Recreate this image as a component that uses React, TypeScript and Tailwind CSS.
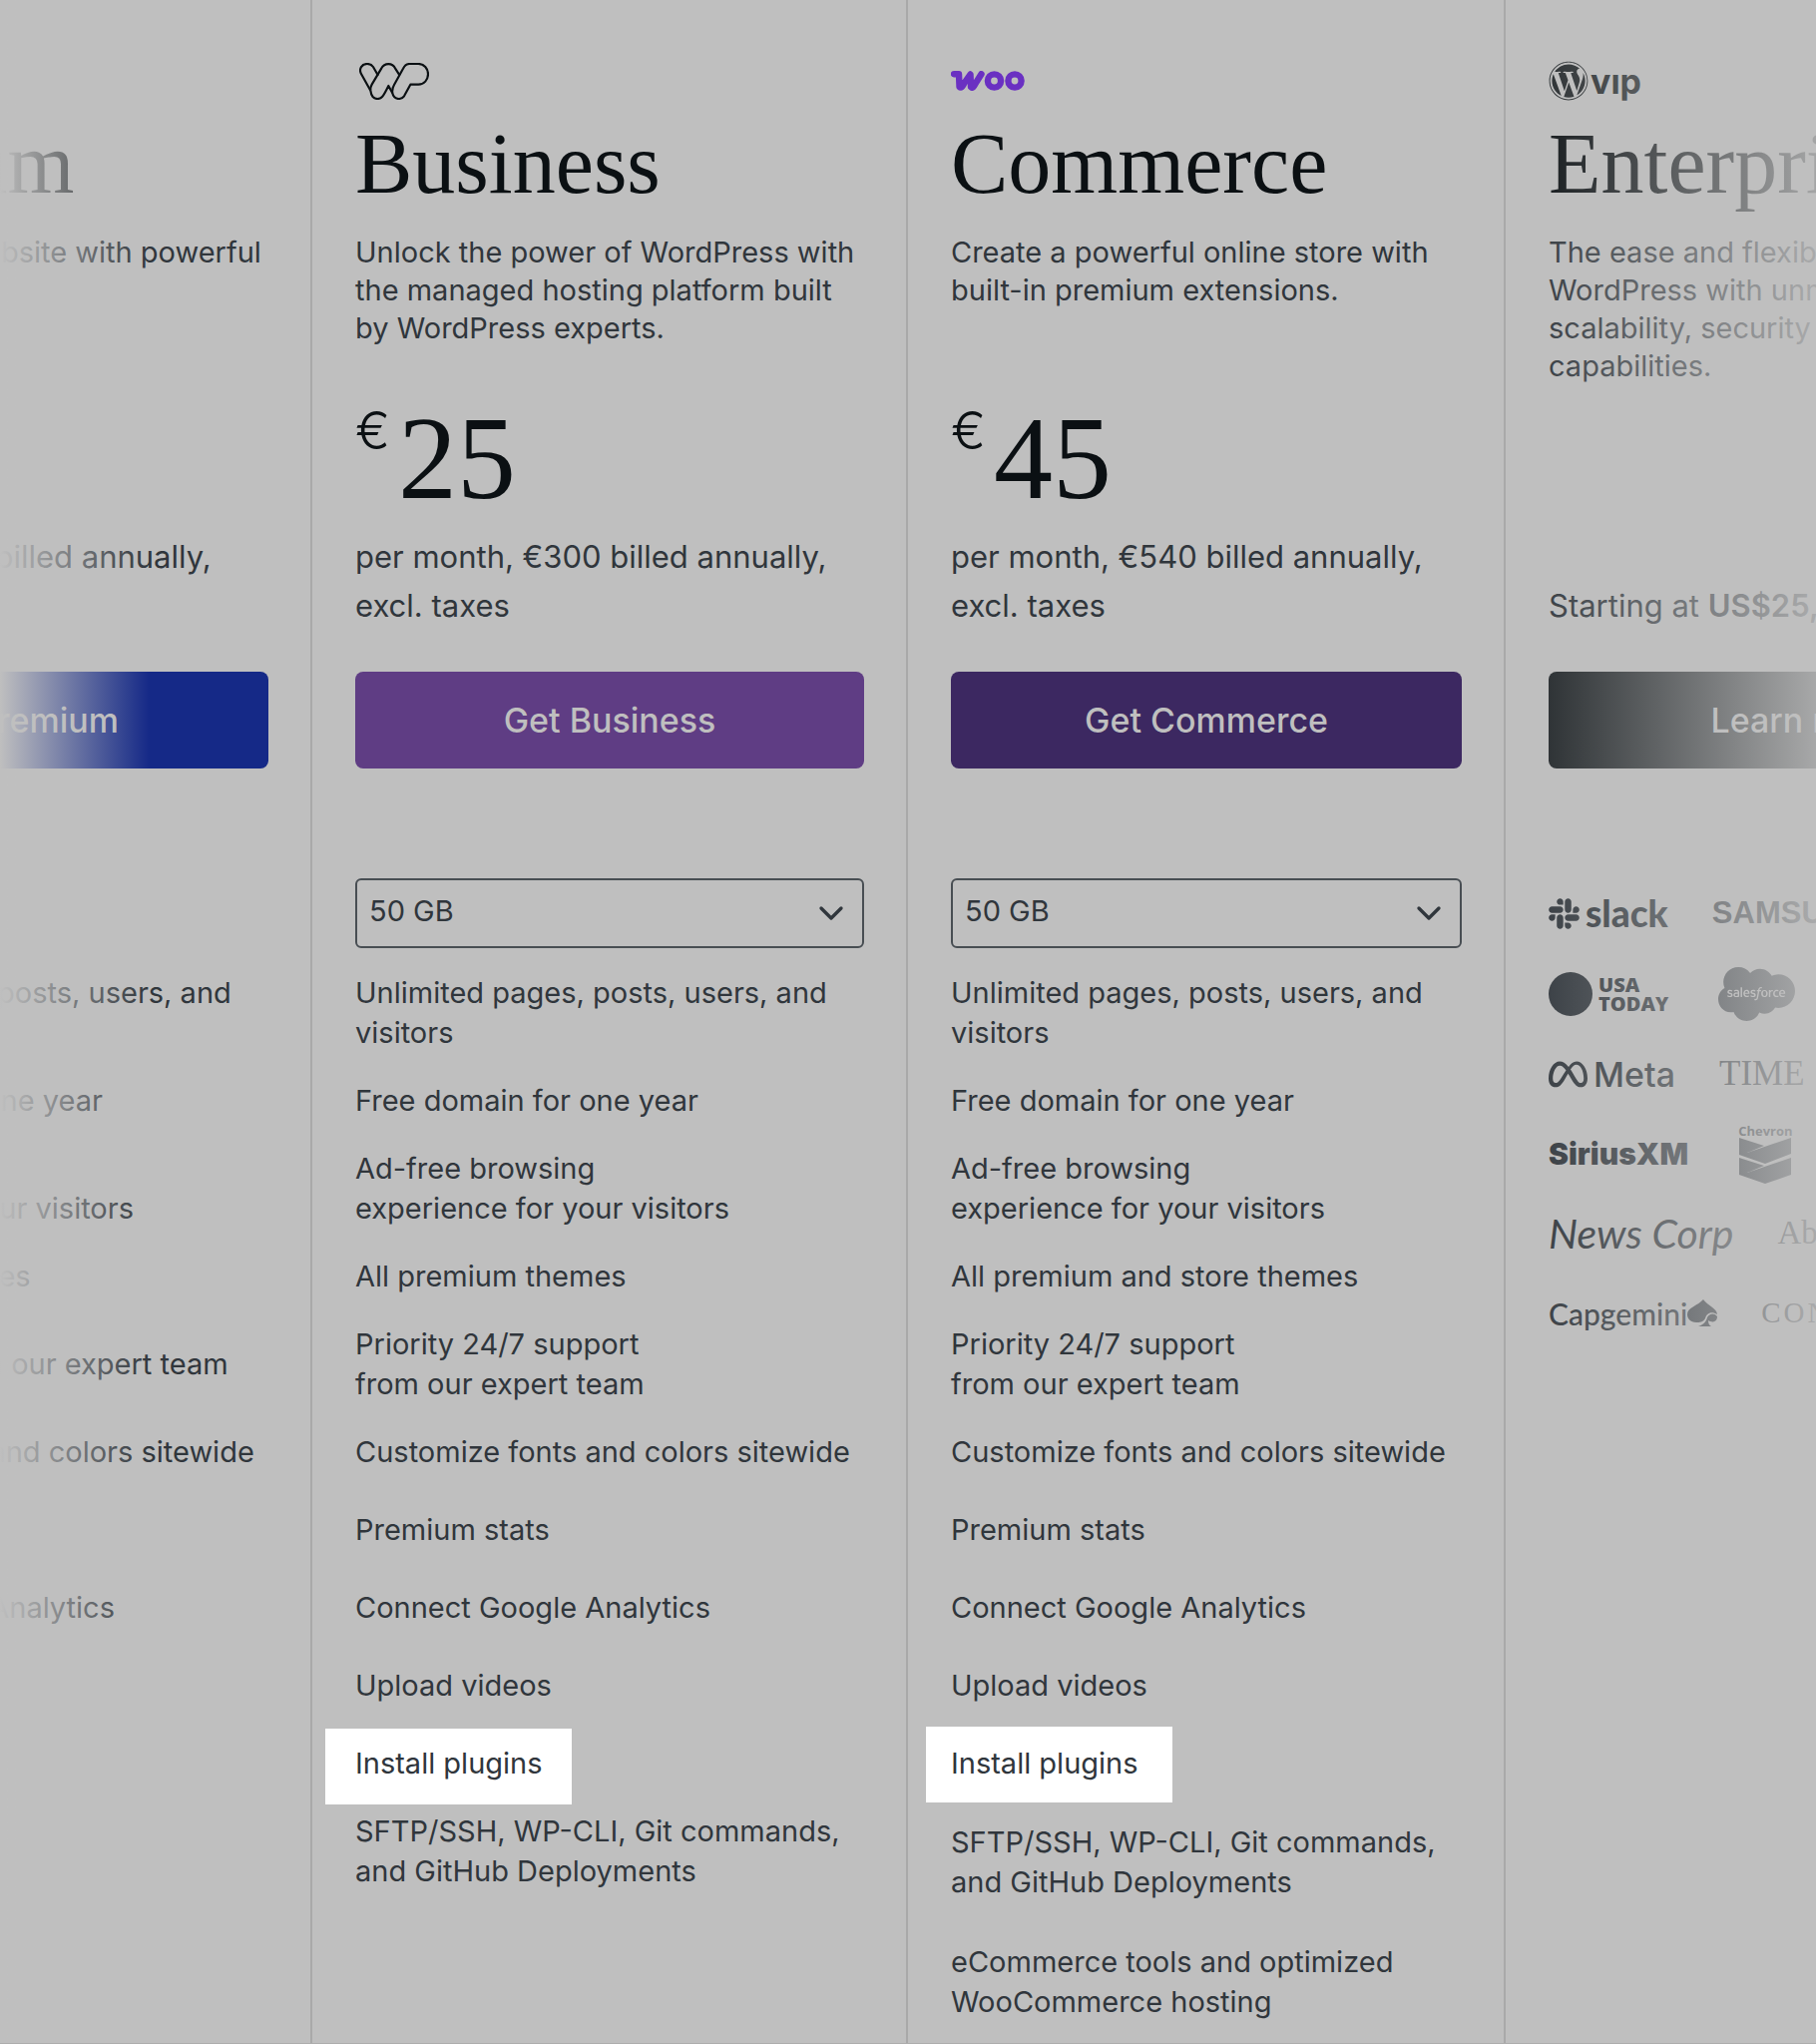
import React from 'react';
import { ChevronDown } from 'lucide-react';
import { FaSlack, FaWordpress, FaSalesforce } from 'react-icons/fa';
import { FaMeta } from 'react-icons/fa6';

interface Feature {
  text: string;
  size?: 'single' | 'double' | 'tall';
  highlight?: string;
}

const rowHeights = {
  single: 'min-h-[78px]',
  double: 'min-h-[98px]',
  tall: 'min-h-[120px]',
};

const premiumFeatures: Feature[] = [
  { text: 'Unlimited pages, posts, users, and visitors', size: 'double' },
  { text: 'Free domain for one year' },
  { text: 'Ad-free browsing\nexperience for your visitors', size: 'double' },
  { text: 'All premium themes' },
  { text: 'Fast support from our expert team', size: 'double' },
  { text: 'Customize fonts and colors sitewide' },
  { text: 'Premium stats' },
  { text: 'Connect Google Analytics' },
];

const businessFeatures: Feature[] = [
  { text: 'Unlimited pages, posts, users, and visitors', size: 'double' },
  { text: 'Free domain for one year' },
  { text: 'Ad-free browsing\nexperience for your visitors', size: 'double' },
  { text: 'All premium themes' },
  { text: 'Priority 24/7 support\nfrom our expert team', size: 'double' },
  { text: 'Customize fonts and colors sitewide' },
  { text: 'Premium stats' },
  { text: 'Connect Google Analytics' },
  { text: 'Upload videos' },
  { text: 'Install plugins', highlight: '-left-[30px] top-1' },
  { text: 'SFTP/SSH, WP-CLI, Git commands, and GitHub Deployments', size: 'double' },
];

const commerceFeatures: Feature[] = [
  { text: 'Unlimited pages, posts, users, and visitors', size: 'double' },
  { text: 'Free domain for one year' },
  { text: 'Ad-free browsing\nexperience for your visitors', size: 'double' },
  { text: 'All premium and store themes' },
  { text: 'Priority 24/7 support\nfrom our expert team', size: 'double' },
  { text: 'Customize fonts and colors sitewide' },
  { text: 'Premium stats' },
  { text: 'Connect Google Analytics' },
  { text: 'Upload videos' },
  { text: 'Install plugins', highlight: '-left-[25px] top-0.5' },
  { text: 'SFTP/SSH, WP-CLI, Git commands, and GitHub Deployments', size: 'tall' },
  { text: 'eCommerce tools and optimized WooCommerce hosting', size: 'tall' },
];

const WpLogo: React.FC = () => (
  <svg viewBox="0 0 210 111" className="ml-1 h-[37px] w-[70px]" fill="none" stroke="#0b1013" strokeWidth="6.5" strokeLinejoin="round">
    <path d="M34 83 L6 33 C-2 18 8 3 24 3 C32 3 38 6 42 12 L57 38" />
    <path d="M34 83 C33 75 35 70 38 65 L67 16 C76 -1 100 -1 108 16 L122 38" />
    <path d="M34 83 C35 92 38 98 41 102 C48 110 62 110 69 102 C76 94 81 82 88 69 L100 91" />
    <path d="M100 91 C98 80 101 73 105 66 L132 17 C137 7 142 3 152 3 H178 C195 3 207 17 207 34 C207 51 195 65 178 65 H154 L135 100 C128 110 113 110 106 103 C103 100 101 96 100 91 Z" />
  </svg>
);

const WooLogo: React.FC = () => (
  <svg viewBox="0 0 74 20" className="h-5 w-[74px]" fill="none" stroke="#6a30c2" strokeWidth="6.4" strokeLinecap="round" strokeLinejoin="round">
    <path d="M3 3.2 H8 L8.5 16 C10.5 18 12 15 13.5 12 L19.5 3.5 L20 16 C22 18 23 15.5 25 12 L30.5 3.2" />
    <circle cx="43.5" cy="10" r="6.6" />
    <circle cx="64" cy="10" r="6.6" />
  </svg>
);

const FeatureList: React.FC<{ features: Feature[] }> = ({ features }) => (
  <ul className="mt-4 text-[29px] leading-10">
    {features.map((feature) => (
      <li key={feature.text} className={`relative flex items-center ${rowHeights[feature.size ?? 'single']}`}>
        {feature.highlight && <span className={`absolute h-[76px] w-[247px] bg-white ${feature.highlight}`} />}
        <span className="relative whitespace-pre-line">{feature.text}</span>
      </li>
    ))}
  </ul>
);

interface PlanProps {
  id: string;
  name: string;
  logo?: React.ReactNode;
  description: string;
  price?: string;
  terms: React.ReactNode;
  button: string;
  buttonColor: string;
  storage?: boolean;
  children: React.ReactNode;
}

const Plan: React.FC<PlanProps> = ({ id, name, logo, description, price, terms, button, buttonColor, storage, children }) => (
  <>
    <header className="h-[402px]">
      <div className="flex h-[120px] items-end">
        <div className="flex h-[78px] items-center">{logo}</div>
      </div>
      <h2 className="-mt-1 font-['Liberation_Serif',serif] text-[86px] leading-[96px] text-[#0b1013]">{name}</h2>
      <p className="mt-[22px] text-[29px] leading-[38px] whitespace-pre-line">{description}</p>
    </header>
    <div className="flex h-[131px] items-start gap-2 text-[#0b1013]">
      {price && (
        <>
          <span className="text-[52px] leading-[60px] font-light">€</span>
          <span className="font-['Liberation_Serif',serif] text-[118px] leading-[116px]">{price}</span>
        </>
      )}
    </div>
    <p className="flex h-[98px] flex-col justify-end text-[31px] leading-[49px]">
      <span>{terms}</span>
    </p>
    <button className={`mt-[42px] h-[97px] w-full rounded-lg text-[34px] font-medium text-[#bfbfbf] ${buttonColor}`}>{button}</button>
    <div className="mt-[110px] h-[70px]">
      {storage && (
        <div className="relative">
          <label htmlFor={`${id}-storage`} className="sr-only">
            Storage
          </label>
          <select id={`${id}-storage`} className="h-[70px] w-full appearance-none rounded-md border-2 border-[#484e53] bg-transparent px-3 pb-1 text-[29px]">
            <option>50 GB</option>
            <option>100 GB</option>
          </select>
          <ChevronDown className="pointer-events-none absolute top-[15px] right-[13px] h-10 w-10" strokeWidth={2} />
        </div>
      )}
    </div>
    {children}
  </>
);

const Logos: React.FC = () => (
  <div className="-mt-[76px] flex flex-col">
    <div className="flex h-[82px] items-center gap-11">
      <span className="flex items-center gap-1.5 font-['Lato',sans-serif] text-[37px] font-black">
        <FaSlack className="h-[35px] w-[31px]" />
        slack
      </span>
      <span className="font-['Liberation_Sans',sans-serif] text-[31px] font-bold">SAMSUNG</span>
    </div>
    <div className="flex h-[80px] items-center gap-[50px]">
      <span className="flex items-center gap-1.5 font-['Open_Sans',sans-serif] text-[20px] leading-[19px] font-extrabold">
        <span className="h-11 w-11 rounded-full bg-current" />
        <span className="flex flex-col">
          <span>USA</span>
          <span>TODAY</span>
        </span>
      </span>
      <FaSalesforce className="h-[62px] w-[77px]" />
    </div>
    <div className="flex h-[80px] items-center gap-11">
      <span className="flex items-center gap-1.5 text-[34px] font-medium">
        <FaMeta className="h-[39px] w-[39px]" />
        Meta
      </span>
      <span className="font-['Liberation_Serif',serif] text-[35px]">TIME</span>
    </div>
    <div className="flex h-[80px] items-center gap-[50px]">
      <span className="text-[30px] font-black">SiriusXM</span>
      <span className="flex flex-col items-center">
        <span className="font-['Open_Sans',sans-serif] text-[13px] leading-[14px] font-bold">Chevron</span>
        <svg viewBox="0 0 52 46" className="h-[46px] w-[52px]" fill="currentColor">
          <path d="M0 0 L25 8 L8 15 L52 0 V16 L26 26 L0 17 Z" />
          <path d="M0 20 L25 28 L8 35 L52 20 V37 L26 46 L0 37 Z" />
        </svg>
      </span>
    </div>
    <div className="flex h-[80px] items-center gap-11">
      <span className="font-['Lato',sans-serif] text-[41px] italic">News Corp</span>
      <span className="font-['Liberation_Serif',serif] text-[33px]">Abbott</span>
    </div>
    <div className="flex h-[80px] items-center gap-11">
      <span className="flex items-center font-['Lato',sans-serif] text-[30px] font-medium">
        Capgemini
        <svg viewBox="0 0 30 28" className="h-7 w-[30px]" fill="currentColor">
          <path d="M16 0 C20 6 30 9 30 15 C24 11 19 14 18 19 C16 23 12 23 9 23 C3 23 0 19 0 15 C0 8 11 6 16 0 Z" />
          <path d="M30 17 C30 22 26 24 21 21 C21 24 22 26 24 27 H11 C17 25 19 22 20 18 C22 14 27 13 30 17 Z" />
        </svg>
      </span>
      <span className="font-['Liberation_Serif',serif] text-[29px] tracking-widest">CONDÉ NAST</span>
    </div>
  </div>
);

const App: React.FC = () => {
  return (
    <main className="relative grid min-h-screen grid-cols-[minmax(0,311fr)_minmax(0,597fr)_minmax(0,599fr)_minmax(0,313fr)] overflow-hidden border-b border-[#adadad] bg-[#bfbfbf] font-['Inter',sans-serif] text-[#30363c]">
      {/* Premium, scrolled partly out on the left */}
      <section className="flex justify-end pr-[42px]">
        <div className="w-[510px] shrink-0">
          <Plan
            id="premium"
            name="Premium"
            description="Build a unique website with powerful design tools."
            terms="per month, €96 billed annually, excl. taxes"
            button="Get Premium"
            buttonColor="bg-[#152987]"
          >
            <FeatureList features={premiumFeatures} />
          </Plan>
        </div>
      </section>

      <section className="border-l-2 border-[#a9a9a9] pr-[42px] pl-[43px]">
        <Plan
          id="business"
          name="Business"
          logo={<WpLogo />}
          description="Unlock the power of WordPress with the managed hosting platform built by WordPress experts."
          price="25"
          terms="per month, €300 billed annually, excl. taxes"
          button="Get Business"
          buttonColor="bg-[#5f3d84]"
          storage
        >
          <FeatureList features={businessFeatures} />
        </Plan>
      </section>

      <section className="border-l-2 border-[#a9a9a9] pr-[42px] pl-[43px]">
        <Plan
          id="commerce"
          name="Commerce"
          logo={<WooLogo />}
          description="Create a powerful online store with built-in premium extensions."
          price="45"
          terms="per month, €540 billed annually, excl. taxes"
          button="Get Commerce"
          buttonColor="bg-[#3c2861]"
          storage
        >
          <FeatureList features={commerceFeatures} />
        </Plan>
      </section>

      {/* Enterprise, running off on the right */}
      <section className="border-l-2 border-[#a9a9a9] pl-[43px]">
        <div className="w-[510px]">
          <Plan
            id="enterprise"
            name="Enterprise"
            logo={
              <span className="flex items-center gap-0.5 text-[34px] font-bold text-[#212629]">
                <FaWordpress className="h-10 w-10" />
                vıp
              </span>
            }
            description={'The ease and flexibility of\nWordPress with unmatched\nscalability, security and\ncapabilities.'}
            terms={
              <>
                Starting at <b className="font-semibold">US$25,000</b> yearly
              </>
            }
            button="Learn more"
            buttonColor="bg-[#212629]"
          >
            <Logos />
          </Plan>
        </div>
      </section>

      {/* Edge fades */}
      <div className="pointer-events-none absolute inset-y-0 left-0 w-[150px] bg-linear-to-r from-[#bfbfbf] to-transparent" />
      <div className="pointer-events-none absolute inset-y-0 right-0 w-[300px] bg-linear-to-l from-[#bfbfbf]/85 to-transparent" />
    </main>
  );
};

export default App;
